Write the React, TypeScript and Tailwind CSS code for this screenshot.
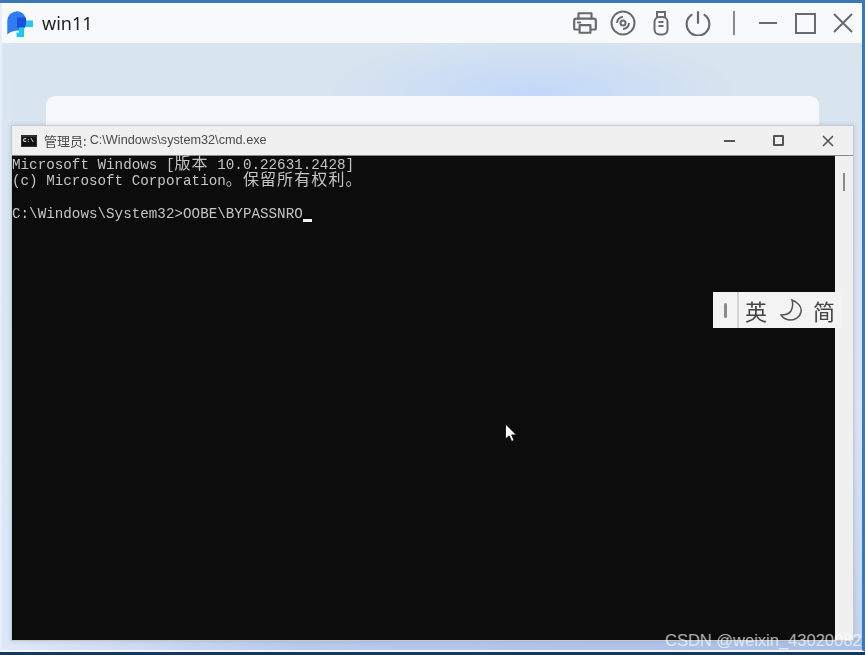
import React from "react";

const Cjk = ({ children }: { children: string }) => (
  <span className="text-[16px] leading-[10px] tracking-[1.1px] font-['Noto_Sans_CJK_SC',sans-serif]">{children}</span>
);

const Ico = ({ children }: { children: React.ReactNode }) => (
  <svg width={26} height={26} viewBox="0 0 24 24" fill="none" stroke="#6a6a6a" strokeWidth="2" strokeLinecap="round" strokeLinejoin="round">
    {children}
  </svg>
);

export default function App() {
  return (
    <div className="relative flex h-[655px] w-[865px] flex-col overflow-hidden bg-[#123a5c] font-['Liberation_Sans',sans-serif]">
      <div className="h-[3px] shrink-0 bg-[#3b78b8]" />
      <div className="flex h-[649px] shrink-0 flex-col border-l-2 border-r-[3px] border-b-2 border-l-[#e6eef8] border-r-[#3b78b8] border-b-[#f2f6fc]">
        <div className="flex h-[40px] shrink-0 items-center justify-between bg-[#f8f9fb] pl-[5px] pr-[9px] blur-[0.35px]">
          <div className="flex items-center gap-[8px]">
            <svg width="27" height="27" viewBox="0 0 27 27" className="mt-[2px]">
              <path d="M0.3 23.6V9.5A9.5 9.5 0 0 1 19 7.5V13C19 17 16 19.5 12 19.5C7 19.5 3 20.5 0.3 23.6Z" fill="#2f7df0" />
              <path d="M10 6.5H19V13C19 15 18.4 16 17 16.8H10Z" fill="#1a4fe0" />
              <path d="M19 9.5H26V16H17V26H9.5V21.5H12V16.5H17.5C18.5 15.5 19 14.5 19 13Z" fill="#22c8ee" />
            </svg>
            <span className="text-[18px] text-[#222] font-['Noto_Sans',sans-serif] leading-none">win11</span>
          </div>
          <div className="flex items-center">
            <Ico>
              <path d="M6 8V3h12v5" />
              <path d="M6 18H3a1 1 0 0 1-1-1v-7a2 2 0 0 1 2-2h16a2 2 0 0 1 2 2v7a1 1 0 0 1-1 1h-3" />
              <path d="M7 14h10v7H7z" />
              <path d="M5.5 11.5h2" />
            </Ico>
            <svg className="ml-[12px]" width="26" height="26" viewBox="0 0 26 26" fill="none" stroke="#6a6a6a" strokeWidth="2">
              <circle cx="13" cy="13" r="11.5" />
              <circle cx="13" cy="13" r="2.5" />
              <path d="M7 13a6 6 0 0 1 6-6M19 13a6 6 0 0 1-6 6" />
            </svg>
            <svg className="ml-[17px]" width="16" height="26" viewBox="0 0 16 26" fill="none" stroke="#6a6a6a" strokeWidth="2">
              <path d="M4 7V2h8v5" />
              <rect x="1.5" y="7" width="13" height="17.5" rx="5" />
              <path d="M5.5 12h5M5.5 16h5" />
            </svg>
            <div className="ml-[16px]">
              <Ico>
                <path d="M12 2v10" />
                <path d="M6 4.5a10.5 10.5 0 1 0 12 0" />
              </Ico>
            </div>
            <div className="ml-[22px] h-[24px] w-[2px] bg-[#8a8a8a]" />
            <div className="ml-[24px] h-[2px] w-[18px] bg-[#6a6a6a]" />
            <div className="ml-[18px] h-[21px] w-[21px] border-2 border-[#6a6a6a]" />
            <svg className="ml-[17px]" width="20" height="20" viewBox="0 0 20 20" stroke="#6a6a6a" strokeWidth="2">
              <path d="M1 1l18 18M19 1L1 19" />
            </svg>
          </div>
        </div>
        <div className="relative flex-1 bg-[linear-gradient(180deg,#d8e4ee_0%,#dbe6f4_60%,#c3d3ef_100%)]">
          <div className="absolute inset-0 bg-[radial-gradient(ellipse_210px_62px_at_530px_52px,#c2d8f9,transparent)]" />
          <div className="absolute bottom-0 left-0 right-0 h-[12px] bg-[linear-gradient(90deg,#e0e8f8_0%,#b8c9ea_35%,#a9bfe5_100%)]" />
          <div className="absolute bottom-0 left-0 top-0 w-[9px] bg-[linear-gradient(180deg,#d9e5ef,#dce8fa)]" />
          <div className="absolute left-[44px] right-[43px] top-[53px] h-[60px] rounded-t-[9px] bg-[#f5f8fd]" />
          {/* cmd window */}
          <div className="absolute left-[9px] top-[82px] flex h-[516px] w-[843px] flex-col border border-[#c6cacc] bg-[#f0f0f0] shadow-[0_0_4px_rgba(80,100,130,0.25)]">
            <div className="flex h-[29px] shrink-0 items-center pl-[9px] blur-[0.3px]">
              <div className="flex h-[12px] w-[16px] items-start border border-[#333] border-t-[2px] bg-[#111] pl-[1px] text-[6px] font-bold leading-[8px] text-white font-['Liberation_Mono',monospace]">
                C:\
              </div>
              <span className="ml-[7px] text-[13px] leading-none text-[#4a4a4a] font-['Noto_Sans_CJK_SC',sans-serif]">管理员:</span>
              <span className="ml-[3px] text-[12.7px] leading-none text-[#4a4a4a] font-['Liberation_Sans',sans-serif]">C:\Windows\system32\cmd.exe</span>
              <div className="ml-auto flex items-center pr-[19px]">
                <div className="h-[2px] w-[11px] bg-[#555]" />
                <div className="ml-[38px] h-[11px] w-[11px] rounded-[1px] border-2 border-[#555]" />
                <svg className="ml-[38px]" width="12" height="12" viewBox="0 0 12 12" stroke="#555" strokeWidth="1.6">
                  <path d="M1 1l10 10M11 1L1 11" />
                </svg>
              </div>
            </div>
            <div className="flex min-h-0 flex-1 border-t border-[#888]">
              <div className="flex-1 bg-[#0c0c0c] pt-[1px] text-[14.25px] leading-[16.3px] text-[#c4c4c4] font-['Liberation_Mono',monospace] whitespace-pre blur-[0.45px]">
                <div className="h-[16.3px]">Microsoft Windows [<Cjk>版本</Cjk> 10.0.22631.2428]</div>
                <div className="h-[16.3px]">(c) Microsoft Corporation<Cjk>。保留所有权利。</Cjk></div>
                <div className="h-[16.3px]" />
                <div className="flex h-[16.3px] items-end">
                  C:\Windows\System32&gt;OOBE\BYPASSNRO
                  <span className="h-[3px] w-[9px] bg-[#f2f2f2]" />
                </div>
              </div>
              <div className="relative w-[18px] shrink-0 bg-[#f0f0f0]">
                <div className="absolute left-[8px] top-[17px] h-[18px] w-[2px] bg-[#8a8a8a]" />
              </div>
            </div>
          </div>
        </div>
      </div>
      {/* IME bar */}
      <div className="absolute left-[713px] top-[292px] flex h-[36px] w-[128px] items-center bg-[#f3f3f3] blur-[0.3px]">
        <div className="flex h-full w-[26px] items-center justify-center border-r-2 border-[#d4d4d4]">
          <div className="h-[15px] w-[3px] rounded-sm bg-[#8a8a8a]" />
        </div>
        <span className="ml-[6px] text-[22px] leading-none text-[#444] font-['Noto_Sans_CJK_SC',sans-serif]">英</span>
        <svg className="ml-[13px]" width="22" height="22" viewBox="0 0 22 22" fill="none" stroke="#555" strokeWidth="1.5">
          <path d="M12 1C18 3 22 8 21 13C20 18 15 21 11 21C7 21 3 19 1 16C5 16 9 15 11 12C13 8 13 4 12 1Z" />
        </svg>
        <span className="ml-[11px] text-[22px] leading-none text-[#444] font-['Noto_Sans_CJK_SC',sans-serif]">简</span>
      </div>
      {/* pointer */}
      <svg className="absolute left-[504px] top-[423px]" width="14" height="20" viewBox="0 0 14 20">
        <path d="M1.5 1v15l3.6-3.2 2.6 5.6 2.4-1.1-2.5-5.4h4.8z" fill="#fff" stroke="#000" strokeWidth="0.8" />
      </svg>
      {/* watermark */}
      <div className="absolute left-[665px] top-[630px] text-[16.5px] leading-[20px] text-white/65 font-['Liberation_Sans',sans-serif] whitespace-nowrap">
        CSDN @weixin_43020082
      </div>
    </div>
  );
}
